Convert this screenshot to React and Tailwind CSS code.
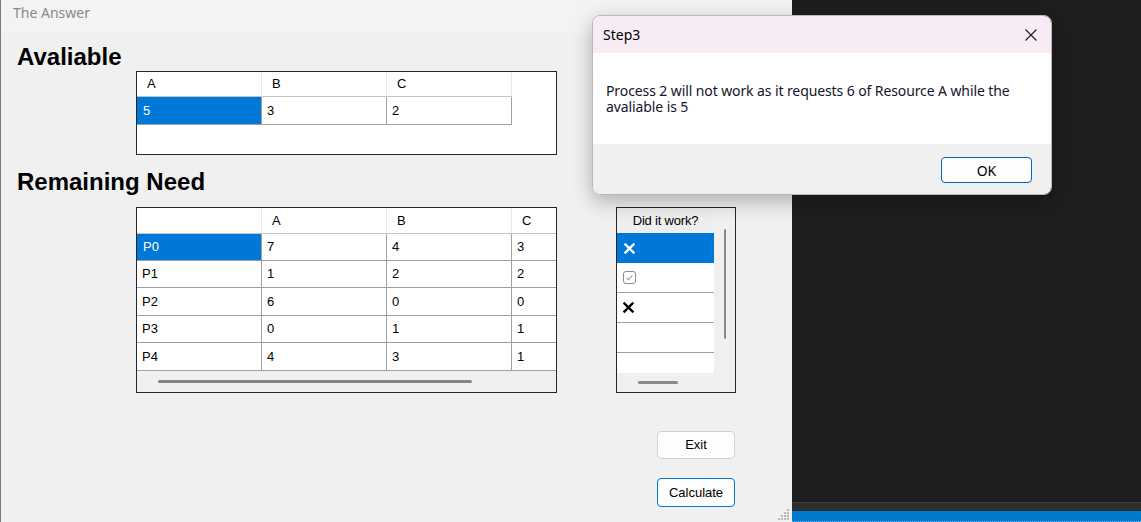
import React from "react";

function XIcon({ color }) {
  return (
    <svg width="11" height="11" viewBox="0 0 11 11">
      <path d="M1.5 1.5L9.5 9.5M9.5 1.5L1.5 9.5" stroke={color} strokeWidth="2.4" strokeLinecap="square" />
    </svg>
  );
}

function CheckIcon() {
  return (
    <svg width="13" height="13" viewBox="0 0 13 13">
      <rect x="0.5" y="0.5" width="12" height="12" rx="2.5" fill="white" stroke="#8f8a94" />
      <path d="M3.5 6.8L5.5 8.7L9.5 4.3" fill="none" stroke="#9aa0aa" strokeWidth="1.1" />
    </svg>
  );
}

function Cell({ children, sel }) {
  return (
    <div
      className={
        sel
          ? "w-[125px] shrink-0 h-full border-r border-b border-[#a0a0a0] pl-[6px] flex items-center bg-[#0078d7] text-white"
          : "w-[125px] shrink-0 h-full border-r border-b border-[#a0a0a0] pl-[5px] flex items-center bg-white text-black"
      }
    >
      {children}
    </div>
  );
}

function HeadCell({ children }) {
  return (
    <div className="w-[125px] shrink-0 h-full border-r border-b border-r-[#e6e6e6] border-b-[#c4c4c4] pl-[10px] flex items-center bg-white text-black">
      {children}
    </div>
  );
}

function AvailableGrid() {
  return (
    <div className="ml-[119px] mt-[2px] w-[421px] h-[84px] border border-[#262626] bg-white overflow-hidden text-[13px] font-['Liberation_Sans',Arial,sans-serif]">
      <div className="flex h-[25px]">
        <HeadCell>A</HeadCell>
        <HeadCell>B</HeadCell>
        <HeadCell>C</HeadCell>
      </div>
      <div className="flex h-[28px]">
        <Cell sel>5</Cell>
        <Cell>3</Cell>
        <Cell>2</Cell>
      </div>
    </div>
  );
}

const NEED = [
  { p: "P0", v: ["7", "4", "3"], h: "h-[27px]" },
  { p: "P1", v: ["1", "2", "2"], h: "h-[27px]" },
  { p: "P2", v: ["6", "0", "0"], h: "h-[28px]" },
  { p: "P3", v: ["0", "1", "1"], h: "h-[27px]" },
  { p: "P4", v: ["4", "3", "1"], h: "h-[28px]" },
];

function NeedGrid() {
  return (
    <div className="ml-[119px] w-[421px] h-[186px] border border-[#262626] bg-[#f0f0f0] overflow-hidden flex flex-col text-[13px] font-['Liberation_Sans',Arial,sans-serif]">
      <div className="flex h-[26px] shrink-0">
        <HeadCell></HeadCell>
        <HeadCell>A</HeadCell>
        <HeadCell>B</HeadCell>
        <HeadCell>C</HeadCell>
      </div>
      {NEED.map((r, i) => (
        <div key={r.p} className={"flex shrink-0 " + r.h}>
          <Cell sel={i === 0}>{r.p}</Cell>
          <Cell>{r.v[0]}</Cell>
          <Cell>{r.v[1]}</Cell>
          <Cell>{r.v[2]}</Cell>
        </div>
      ))}
      <div className="flex-1 flex items-center pl-[21px]">
        <div className="w-[314px] h-[3px] rounded-full bg-[#858585]" />
      </div>
    </div>
  );
}

function WorkList() {
  return (
    <div className="ml-[59px] w-[120px] h-[186px] border border-[#262626] bg-[#f0f0f0] flex flex-col overflow-hidden text-[13px] font-['Liberation_Sans',Arial,sans-serif]">
      <div className="flex h-[165px] shrink-0">
        <div className="w-[97px] shrink-0 flex flex-col bg-white overflow-hidden">
          <div className="h-[25px] shrink-0 bg-[#eeeeee] flex items-center justify-center text-black tracking-[-0.2px]">
            Did it work?
          </div>
          <div className="h-[30px] shrink-0 bg-[#0078d7] flex items-center pl-[7px]">
            <XIcon color="white" />
          </div>
          <div className="h-[30px] shrink-0 border-b border-[#a0a0a0] flex items-center pl-[6px]">
            <CheckIcon />
          </div>
          <div className="h-[30px] shrink-0 border-b border-[#a0a0a0] flex items-center pl-[6px]">
            <XIcon color="black" />
          </div>
          <div className="h-[30px] shrink-0 border-b border-[#a0a0a0]" />
          <div className="flex-1" />
        </div>
        <div className="flex-1 flex justify-center pt-[21px]">
          <div className="w-[2px] h-[110px] rounded-full bg-[#8a8a8a]" />
        </div>
      </div>
      <div className="flex-1 flex items-center pl-[21px]">
        <div className="w-[40px] h-[3px] rounded-full bg-[#8a8a8a]" />
      </div>
    </div>
  );
}

function MainWindow() {
  return (
    <div className="relative w-[792px] shrink-0 h-full bg-[#f0f0f0] border-l border-[#7a7a7a] flex flex-col">
      <div className="h-[33px] shrink-0 bg-[#f3f3f3] pl-[12px] pt-[3px] text-[14px] leading-[19px] text-[#8a8a8a] font-['Noto_Sans',sans-serif]">
        The Answer
      </div>
      <div className="flex-1 flex flex-col pl-[16px]">
        <div className="mt-[12px] text-[24px] leading-[24px] font-bold text-black font-['Liberation_Sans',Arial,sans-serif]">
          Avaliable
        </div>
        <AvailableGrid />
        <div className="mt-[15px] text-[24px] leading-[24px] font-bold text-black font-['Liberation_Sans',Arial,sans-serif]">
          Remaining Need
        </div>
        <div className="mt-[13px] flex">
          <NeedGrid />
          <WorkList />
        </div>
        <div className="ml-[640px] flex flex-col text-[13px] text-black font-['Liberation_Sans',Arial,sans-serif]">
          <button className="mt-[38px] w-[78px] h-[28px] rounded-[4px] border border-[#d0d0d0] bg-[#fdfdfd] flex items-center justify-center">
            Exit
          </button>
          <button className="mt-[19px] w-[78px] h-[29px] rounded-[4px] border-[1.5px] border-[#0078d7] bg-[#fdfdfd] flex items-center justify-center">
            Calculate
          </button>
        </div>
      </div>
      <svg className="absolute right-[2px] bottom-[2px]" width="12" height="12" viewBox="0 0 12 12">
        <rect x="9" y="1" width="2" height="2" fill="#b8b8b8" />
        <rect x="6" y="4" width="2" height="2" fill="#b8b8b8" />
        <rect x="9" y="4" width="2" height="2" fill="#b8b8b8" />
        <rect x="3" y="7" width="2" height="2" fill="#b8b8b8" />
        <rect x="6" y="7" width="2" height="2" fill="#b8b8b8" />
        <rect x="9" y="7" width="2" height="2" fill="#b8b8b8" />
        <rect x="0" y="10" width="2" height="2" fill="#b8b8b8" />
        <rect x="3" y="10" width="2" height="2" fill="#b8b8b8" />
        <rect x="6" y="10" width="2" height="2" fill="#b8b8b8" />
        <rect x="9" y="10" width="2" height="2" fill="#b8b8b8" />
      </svg>
    </div>
  );
}

function Dialog() {
  return (
    <div className="absolute left-[592px] top-[15px] w-[460px] h-[180px] rounded-[8px] border border-[#b9b9b9] overflow-hidden flex flex-col shadow-[0_6px_20px_rgba(0,0,0,0.28)] font-['Noto_Sans',sans-serif]">
      <div className="h-[37px] shrink-0 bg-[#f7ecf5] flex items-center justify-between pl-[10px] pr-[14px]">
        <span className="text-[14px] text-black">Step3</span>
        <svg width="12" height="12" viewBox="0 0 12 12">
          <path d="M0.5 0.5L11.5 11.5M11.5 0.5L0.5 11.5" stroke="#1a1a1a" strokeWidth="1.1" />
        </svg>
      </div>
      <div className="h-[91px] shrink-0 bg-white pl-[13px] pt-[30px] text-[14px] leading-[16px] text-[#14142a] tracking-[-0.1px]">
        Process 2 will not work as it requests 6 of Resource A while the
        <br />
        avaliable is 5
      </div>
      <div className="flex-1 bg-[#f0f0f0] flex justify-end items-start pt-[13px] pr-[19px]">
        <button className="w-[91px] h-[26px] rounded-[4px] border-[1.5px] border-[#0067c0] bg-[#fdfdfd] text-[14px] text-black flex items-center justify-center">
          OK
        </button>
      </div>
    </div>
  );
}

export default function App() {
  return (
    <div className="relative w-[1141px] h-[522px] overflow-hidden bg-[#1e1e1e] flex">
      <MainWindow />
      <div className="flex-1 flex flex-col">
        <div className="flex-1" />
        <div className="h-[9px] bg-[#2f2f2f] border-t border-[#3a3a3a]" />
        <div className="h-[11px] bg-[#007acc] border-b border-dotted border-[#6fb3e0]" />
      </div>
      <Dialog />
    </div>
  );
}
